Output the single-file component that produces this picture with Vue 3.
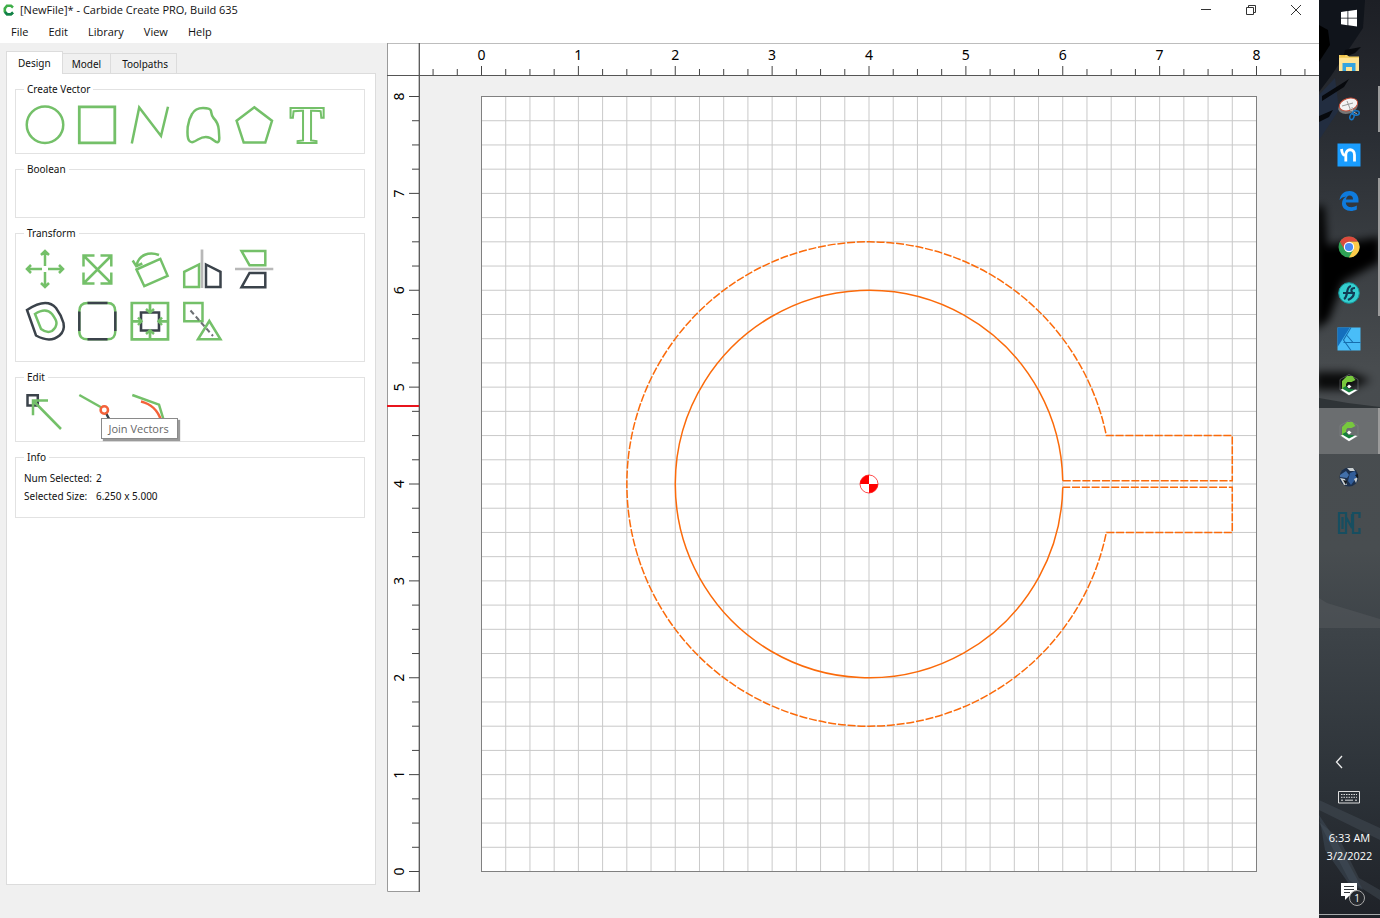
<script setup>
import { ref } from 'vue';

const menus = ['File', 'Edit', 'Library', 'View', 'Help'];
const tabs = ['Design', 'Model', 'Toolpaths'];
const activeTab = ref('Design');

const G = '#74c069';
const D = '#3b434b';
const R = '#f4623a';
const S = '#b8b8b8';

// every tool is a list of strokes on a 40 x 40 grid
const groups = [
    {
        name: 'Create Vector',
        tools: [
            { label: 'Circle', strokes: [{ c: G, d: 'M20 1.5A18.2 18.2 0 1 1 20 38A18.2 18.2 0 1 1 20 1.5Z' }] },
            { label: 'Rectangle', strokes: [{ c: G, w: 2.8, d: 'M2.3 1.9H37.8V37.9H2.3Z' }] },
            { label: 'Polyline', strokes: [{ c: G, d: 'M1.8 38.5L9.2 2.5L31 31L38 1.8' }] },
            { label: 'Curve', strokes: [{ c: G, d: 'M10 9C13 3.5 17 3 21 3C26 3 28.5 3.5 29 6C29.5 9 29.5 11 31.5 13C35 16.5 36.5 20 36.8 25L37.3 33C37.3 37.5 35.5 38.5 32 35.5C27 31 21 31.5 16 34.5C12 37 9.5 38.5 7 35.5C5 32.5 5.3 27 5.7 22C6.3 17 7.5 13 10 9Z' }] },
            { label: 'Polygon', strokes: [{ c: G, d: 'M20.3 2.3L38 15.8L31.3 37.6H9.7L2.6 15.8Z' }] },
            { label: 'Text', letter: 'T', strokes: [] }
        ]
    },
    { name: 'Boolean', tools: [] },
    {
        name: 'Transform',
        roomy: true,
        tools: [
            { label: 'Move', strokes: [{ c: G, d: 'M20 2V17M20 23V38M2 20H17M23 20H38M16 6L20 2L24 6M16 34L20 38L24 34M6 16L2 20L6 24M34 16L38 20L34 24' }] },
            { label: 'Scale', strokes: [{ c: G, d: 'M7 7L34 34M34 7L7 34M6.5 17.5V6.5H17.5M23.5 6.5H34.3V17.5M34.3 23.5V34.5H23.5M17.5 34.5H6.5V23.5' }] },
            { label: 'Rotate', strokes: [{ c: G, d: 'M6.5 20.5L30.3 9.8L37.6 26.8L14.3 37.2ZM29 6C19 2 9 6 6.5 16M2.7 11.5L6.3 17.2L12.3 14.5' }] },
            { label: 'Mirror Horizontal', strokes: [{ c: S, w: 2.7, d: 'M20 0.5V39' }, { c: G, d: 'M17 15.5V38H2.2V22.8Z' }, { c: D, d: 'M24 15.5L38.5 22.8V38H24Z' }] },
            { label: 'Mirror Vertical', strokes: [{ c: S, w: 2.7, d: 'M1 20H39.3' }, { c: G, d: 'M7.5 2H31.3V16.2H15.5Z' }, { c: D, d: 'M15.5 24H31.3V38.3H7.5Z' }] },
            { label: 'Offset Vectors', row: true, strokes: [{ c: D, d: 'M2 9C14 1 24 -1 31 7C34 11 37 17 38.5 22C39.5 27 38.5 31 34.5 34.5C28 40 20 39.5 11 34.5Z' }, { c: G, d: 'M10 13C17 8.5 23 8.5 27 13C30 17 31.5 19.5 31.5 22C31.5 26 29.5 28 27 30C23 32 20 31 16 28Z' }] },
            { label: 'Fillet Vectors', strokes: [{ c: G, d: 'M2.3 10.5C2.3 4.5 5 2 10.5 2H30.5C36 2 38.3 4.5 38.3 10.5V30C38.3 36 36 38.3 30.5 38.3H10.5C5 38.3 2.3 36 2.3 30Z' }, { c: D, d: 'M10.5 2H30.5M10.5 38.3H30.5M2.3 10.5V30M38.3 10.5V30' }] },
            { label: 'Align Vectors', strokes: [{ c: D, w: 2.6, d: 'M11 11.5H29V29.5H11Z' }, { c: G, w: 2.7, d: 'M1.8 2H38V38.3H1.8Z M20 2V11M20 38V30M2 20.3H11M38 20.3H29' }, { c: G, d: 'M16 8L20 11.5L24 8M16 33L20 29.5L24 33M8 16.5L11.5 20.3L8 24M32 16.5L28.5 20.3L32 24' }] },
            { label: 'Linear Array', strokes: [{ c: G, d: 'M2.3 2H20.5V20.3H2.3ZM27.3 20L38.5 38.3H16Z' }, { c: '#6d7074', w: 2, dash: '5 3', d: 'M8.5 9.5L31 35' }] }
        ]
    },
    {
        name: 'Edit',
        tools: [
            { label: 'Node Edit', strokes: [{ c: D, d: 'M2.5 2.3H12.8V12.5H2.5Z' }, { c: G, d: 'M23 7.5H8V22.3M8 7.5L36 36' }] },
            { label: 'Join Vectors', tip: true, strokes: [{ c: G, d: 'M2.3 2L24.5 14.5' }, { c: D, d: 'M29 20L31.5 25L38 36' }, { c: R, w: 2.5, d: 'M27.3 13.3A3.7 3.7 0 1 1 27.3 20.7A3.7 3.7 0 1 1 27.3 13.3Z' }] },
            { label: 'Trim Vectors', strokes: [{ c: G, d: 'M2.3 2L29 11.7L37 38' }, { c: R, d: 'M11 8.5C21 11 27 16 31 27' }] }
        ]
    }
];

// drawing area, inches to canvas units
const PX = 96.875;
const sx = (v) => 94.5 + v * PX;
const sy = (v) => 828.5 - v * PX;

const quarters = Array.from({ length: 33 }, (_, i) => i / 4);
const topTicks = Array.from({ length: 37 }, (_, i) => i / 4 - 0.5);
const inches = Array.from({ length: 9 }, (_, i) => i);
const isMajor = (v) => Number.isInteger(v) && v >= 0;

const outer = 2.5 * PX;
const inner = 2 * PX;
const slit = 0.034;
const clampShape = [
    `M${sx(6)} ${sy(4 + slit)}H${sx(7.75)}V${sy(4.5)}H${sx(6.45)}`,
    `A${outer} ${outer} 0 1 0 ${sx(6.45)} ${sy(3.5)}`,
    `H${sx(7.75)}V${sy(4 - slit)}H${sx(6)}`
].join('');
const boreShape = `M${sx(6)} ${sy(4 + slit)}A${inner} ${inner} 0 1 0 ${sx(6)} ${sy(4 - slit)}`;

const apps = [
    { id: 'explorer', label: 'File Explorer' },
    { id: 'snip', label: 'Snipping Tool', open: true },
    { id: 'nextdoor', label: 'Nextdoor' },
    { id: 'edge', label: 'Microsoft Edge', open: true },
    { id: 'chrome', label: 'Google Chrome', open: true },
    { id: 'freehand', label: 'Freehand', open: true },
    { id: 'affinity', label: 'Affinity Designer' },
    { id: 'carbide', label: 'Carbide Create' },
    { id: 'carbide', label: 'Carbide Create PRO', open: true, active: true },
    { id: 'globe', label: 'Globe' },
    { id: 'cnc', label: 'CNC' }
];
</script>

<template>
    <div class="desktop">
        <div class="window">
            <header class="titlebar">
                <svg class="logo" viewBox="0 0 12 12">
                    <path d="M10 3.5L8 1.8H4L1.8 4.5V7.5L4 10.2H8L10 8.5" fill="none" stroke="#3fae49" stroke-width="2.6" />
                    <path d="M2 8L4 10.2H8L10 8.5" fill="none" stroke="#12804a" stroke-width="2.6" />
                </svg>
                <h1>[NewFile]* - Carbide Create PRO, Build 635</h1>
                <div class="controls">
                    <button type="button" aria-label="Minimize">
                        <svg viewBox="0 0 12 12"><path d="M1 5.5H11" /></svg>
                    </button>
                    <button type="button" aria-label="Restore">
                        <svg viewBox="0 0 12 12"><path d="M1.5 3.5H8.5V10.5H1.5ZM3.5 3.5V1.5H10.5V8.5H8.5" /></svg>
                    </button>
                    <button type="button" aria-label="Close">
                        <svg viewBox="0 0 12 12"><path d="M1 1L11 11M11 1L1 11" /></svg>
                    </button>
                </div>
            </header>

            <nav class="menubar">
                <button v-for="menu in menus" :key="menu" type="button">{{ menu }}</button>
            </nav>

            <main class="workspace">
                <aside class="side">
                    <div class="tabs" role="tablist">
                        <button v-for="tab in tabs" :key="tab" type="button" role="tab" :aria-selected="tab === activeTab"
                            :class="{ active: tab === activeTab }" @click="activeTab = tab">{{ tab }}</button>
                    </div>
                    <div class="pane">
                        <fieldset v-for="group in groups" :key="group.name" :class="{ roomy: group.roomy }">
                            <legend>{{ group.name }}</legend>
                            <div class="tools">
                                <div v-for="tool in group.tools" :key="tool.label" class="tool" :class="{ row: tool.row }">
                                    <button type="button" :aria-label="tool.label">
                                        <svg viewBox="0 0 40 40">
                                            <path v-for="(s, i) in tool.strokes" :key="i" :d="s.d" fill="none" :stroke="s.c"
                                                :stroke-width="s.w || 2.5" :stroke-dasharray="s.dash" />
                                            <text v-if="tool.letter" class="outlined" x="20" y="37.5">{{ tool.letter }}</text>
                                        </svg>
                                    </button>
                                    <span v-if="tool.tip" class="tooltip" role="tooltip">{{ tool.label }}</span>
                                </div>
                            </div>
                        </fieldset>
                        <fieldset class="info">
                            <legend>Info</legend>
                            <dl>
                                <dt>Num Selected:</dt>
                                <dd>2</dd>
                                <dt>Selected Size:</dt>
                                <dd>6.250 x 5.000</dd>
                            </dl>
                        </fieldset>
                    </div>
                </aside>

                <svg class="canvas" viewBox="0 0 932 849">
                    <rect x="0" y="0" width="932" height="32" fill="#fff" />
                    <rect x="0" y="0" width="32" height="849" fill="#fff" />
                    <path d="M0 0.5H932" stroke="#bdbdbd" />
                    <path d="M0.5 0V848.5H32" stroke="#9a9a9a" fill="none" />
                    <path d="M0 32.5H932" stroke="#555" />
                    <path d="M32.3 0V849" stroke="#555" stroke-width="1.3" />

                    <g stroke="#444">
                        <line v-for="t in topTicks" :key="'t' + t" :x1="sx(t)" :x2="sx(t)" :y1="isMajor(t) ? 23 : 26" y2="32" />
                        <line v-for="t in quarters" :key="'l' + t" :y1="sy(t)" :y2="sy(t)" :x1="isMajor(t) ? 22 : 25" x2="32" />
                    </g>
                    <g class="numbers">
                        <text v-for="n in inches" :key="'x' + n" :x="sx(n)" y="17">{{ n }}</text>
                        <text v-for="n in inches" :key="'y' + n" :transform="`translate(17 ${sy(n)}) rotate(-90)`">{{ n }}</text>
                    </g>
                    <path d="M0 363H32" stroke="#e8141c" stroke-width="2" />

                    <rect :x="sx(0)" :y="sy(8)" :width="8 * PX" :height="8 * PX" fill="#fff" />
                    <g stroke="#c9c9c9">
                        <line v-for="q in quarters" :key="'v' + q" :x1="sx(q)" :x2="sx(q)" :y1="sy(0)" :y2="sy(8)" />
                        <line v-for="q in quarters" :key="'h' + q" :x1="sx(0)" :x2="sx(8)" :y1="sy(q)" :y2="sy(q)" />
                    </g>
                    <rect :x="sx(0)" :y="sy(8)" :width="8 * PX" :height="8 * PX" fill="none" stroke="#808080" />

                    <path :d="clampShape" class="vector" stroke-dasharray="8 1.8" />
                    <path :d="boreShape" class="vector" />

                    <g :transform="`translate(${sx(4)} ${sy(4)})`">
                        <circle r="9" fill="#fff" stroke="#f00" stroke-width="0.7" />
                        <path d="M0 0H-9A9 9 0 0 1 0 -9ZM0 0H9A9 9 0 0 1 0 9Z" fill="#f00" />
                    </g>
                </svg>
            </main>
        </div>

        <aside class="taskbar">
            <svg class="wallpaper" viewBox="0 0 61 918" preserveAspectRatio="none">
                <defs>
                    <linearGradient id="sky" x1="0" y1="0" x2="0" y2="1">
                        <stop offset="0" stop-color="#1d1f25" />
                        <stop offset="0.15" stop-color="#2a2e34" />
                        <stop offset="0.27" stop-color="#393d41" />
                        <stop offset="0.4" stop-color="#484c4f" />
                        <stop offset="0.6" stop-color="#484d50" />
                        <stop offset="0.69" stop-color="#3d4348" />
                        <stop offset="0.86" stop-color="#2c3238" />
                        <stop offset="1" stop-color="#1f2228" />
                    </linearGradient>
                    <filter id="soft" x="-50%" y="-50%" width="200%" height="200%">
                        <feGaussianBlur stdDeviation="4" />
                    </filter>
                </defs>
                <rect width="61" height="918" fill="url(#sky)" />
                <path d="M0 0H46L44 28L12 76L0 92Z" fill="#10141b" />
                <path d="M0 25L9 30L11 45L0 62Z" fill="#000" />
                <path d="M0 95L16 78L20 110L0 140Z" fill="#222d40" />
                <path d="M3 96L30 79L25 87L3 101ZM0 116L14 110L10 117L0 122ZM26 50L42 47L36 53L24 58Z" fill="#07090d" />
                <path d="M-4 206H5L8 245L61 237V262L24 282L10 320L-4 330Z" fill="#000" filter="url(#soft)" />
                <path d="M-4 372H30L52 380L30 390H-4Z" fill="#000" opacity="0.85" filter="url(#soft)" />
                <path d="M0 398Q30 404 61 407V410H0Z" fill="#2f3437" />
                <path d="M0 598L8 603L61 619V628H0Z" fill="#555a5d" opacity="0.5" />
                <path d="M0 800L61 828V840L0 810ZM0 822L20 838L40 878L61 890V900L30 880Z" fill="#4b565f" opacity="0.4" />
                <path d="M0 815L18 842L44 890L30 884L6 850Z" fill="#465664" opacity="0.4" />
                <path d="M0 914.5H61" stroke="#a6a8aa" />
            </svg>

            <button type="button" class="start" aria-label="Start">
                <svg viewBox="0 0 24 24">
                    <path d="M4 6L10.5 5V11.7H4ZM11.3 4.9L20 3.7V11.7H11.3ZM4 12.5H10.5V19.2L4 18.2ZM11.3 12.5H20V20.5L11.3 19.3Z" fill="#fff" />
                </svg>
            </button>

            <button v-for="app in apps" :key="app.label" type="button" class="app" :class="{ open: app.open, active: app.active }"
                :aria-label="app.label">
                <svg v-if="app.id === 'explorer'" viewBox="0 0 24 24">
                    <path d="M2 4H10L12 5.5H22V20H2Z" fill="#f4cf63" />
                    <path d="M2 7H22V20H2Z" fill="#ffe394" />
                    <path d="M3.5 4.8H8" stroke="#e9b93c" stroke-width="1.2" />
                    <path d="M5.5 12H18.5V20H15V16H9V20H5.5Z" fill="#35a4df" />
                </svg>
                <svg v-else-if="app.id === 'snip'" viewBox="0 0 24 24">
                    <ellipse cx="11" cy="10" rx="10" ry="6.5" fill="#777" transform="rotate(-18 11 10)" />
                    <ellipse cx="11.5" cy="7.5" rx="9.5" ry="6" fill="#f3f3f3" stroke="#c64a35" transform="rotate(-18 11.5 7.5)" />
                    <path d="M10 4L14 14M5 9L16 6" stroke="#999" />
                    <path d="M12 12L20 17M15 10L16 18" stroke="#aaa" />
                    <g fill="none" stroke="#1878c8" stroke-width="1.5">
                        <ellipse cx="19" cy="16" rx="3.3" ry="2.2" />
                        <ellipse cx="15" cy="19.5" rx="2" ry="3.2" transform="rotate(20 15 19.5)" />
                    </g>
                </svg>
                <svg v-else-if="app.id === 'nextdoor'" viewBox="0 0 24 24">
                    <rect x="0.5" y="0.5" width="23" height="23" fill="#1a9dff" />
                    <path d="M4.5 6C5 11 6 12 8.5 12.5M8.8 18.500V12C8.800 5 17.500 5 17.500 12V18.500" fill="none" stroke="#fff" stroke-width="2.8" />
                </svg>
                <svg v-else-if="app.id === 'edge'" viewBox="0 0 24 24">
                    <path d="M2.5 11C3.5 5 7.5 2 12.5 2C18.5 2 21.5 6.5 21.5 11V13.5H8.8C9 18.5 15 19.5 19.8 16.5V20.5C13 24 5 21 5 14.5C5 11 7 8.5 9.5 7.5C6.5 7.8 4 9 2.5 11ZM9 10.5H16C16 7.5 14.5 6.5 12.8 6.5C10.5 6.5 9.3 8.5 9 10.5Z" fill="#0f7bdc" />
                </svg>
                <svg v-else-if="app.id === 'chrome'" viewBox="0 0 24 24">
                    <circle cx="12" cy="12" r="10.5" fill="#2fa255" />
                    <path d="M12 12L2.9 6.75A10.5 10.5 0 0 1 21.1 6.75H12Z" fill="#dc4a3d" />
                    <path d="M21.1 6.75A10.5 10.5 0 0 1 12 22.5L16.5 14.5L12 6.75Z" fill="#fccb4a" />
                    <path d="M2.9 6.75L7.5 14.6L12 12Z" fill="#dc4a3d" />
                    <circle cx="12" cy="12" r="5.2" fill="#fff" />
                    <circle cx="12" cy="12" r="4.1" fill="#4a8bf5" />
                </svg>
                <svg v-else-if="app.id === 'freehand'" viewBox="0 0 24 24">
                    <circle cx="12" cy="12" r="10.3" fill="#35cfd0" stroke="#159a9e" />
                    <path d="M6 12H18M14 5C8 6 12 15 7 18M18 7C13 7 14 11 16 12C18 14 15 17 11 19" fill="none" stroke="#123c55" stroke-width="2.2" />
                </svg>
                <svg v-else-if="app.id === 'affinity'" viewBox="0 0 24 24">
                    <rect x="0.5" y="0.5" width="23" height="23" fill="#49bdf8" />
                    <path d="M0.5 0.5H13L0.5 20Z" fill="#146fbd" />
                    <path d="M14 0.5L6.5 13L14 23.5M6.5 15.5H23.5M10 8.5L16 15.5" fill="none" stroke="#176eae" stroke-width="1.1" />
                </svg>
                <svg v-else-if="app.id === 'carbide'" viewBox="0 0 24 24">
                    <path d="M12 1.5L21 6.5V17L12 22L3 17V6.5Z" fill="none" stroke="#85898a" stroke-width="0.7" opacity="0.7" />
                    <path d="M5 8L10 3H15.5L18.5 7L14.5 9H10.5L9 11V14L5 17Z" fill="#77c83d" />
                    <path d="M5.5 15L9 13L11.5 16H15.5L18.5 17.5L15 20H9.5Z" fill="#16803c" />
                    <path d="M10 13.5L12 11.5L14.5 13.5L12 15.5ZM3.5 16.5L6 16L12 19.5L18 16.5L20.5 17L12 22.3Z" fill="#fff" />
                </svg>
                <svg v-else-if="app.id === 'globe'" viewBox="0 0 24 24">
                    <circle cx="12" cy="12" r="9.5" fill="#1c304d" />
                    <path d="M3 10L9 6L12 10L10 13L3 12Z" fill="#4270aa" />
                    <path d="M13 8L18 6L20 12L14 20L11 16Z" fill="#315d9a" />
                    <path d="M10 3H16L18 6L13 6ZM3 13L8 14L10 20L7 20ZM17 14L21 12L19 18Z" fill="#c9cecf" />
                    <path d="M6 15L10 16L9 20ZM18 10L21 9V14Z" fill="#14181c" />
                </svg>
                <svg v-else viewBox="0 0 24 24">
                    <path d="M9 6V2H2V22H9V18M9 18V6L15 17V3M22.5 7V2H16V22H22.500V17M5.500 6V18" fill="none" stroke="#174e60" stroke-width="2.2" />
                </svg>
            </button>

            <div class="tray">
                <button type="button" class="chevron" aria-label="Show hidden icons">
                    <svg viewBox="0 0 24 24"><path d="M15 6L9.5 12L15 18" fill="none" stroke="#eee" stroke-width="1.3" /></svg>
                </button>
                <button type="button" class="keyboard" aria-label="Touch keyboard">
                    <svg viewBox="0 0 24 24">
                        <path d="M1.5 6.5H22.5V18H1.5Z" fill="none" stroke="#ddd" />
                        <path d="M4 9.5H20M4 12.3H20" stroke="#ddd" stroke-dasharray="1.5 1" />
                        <path d="M4 15.2H6M8 15.2H16M18 15.2H20" stroke="#ddd" />
                    </svg>
                </button>
                <time datetime="2022-03-02T06:33">6:33 AM<br>3/2/2022</time>
                <button type="button" class="notes" aria-label="Notifications">
                    <svg viewBox="0 0 24 24">
                        <path d="M4 3H20V16H12L8 20V16H4Z" fill="#fff" />
                        <path d="M7 6.5H17M7 9.5H17M7 12.5H13" stroke="#33373c" />
                    </svg>
                    <span class="badge">1</span>
                </button>
            </div>
        </aside>
    </div>
</template>

<style>
body {
    margin: 0;
}
</style>

<style scoped>
.desktop {
    display: flex;
    min-height: 100vh;
    background: #f0f0f0;
    color: #111;
    font-family: "Open Sans", "Noto Sans", sans-serif;
    font-size: 11px;
}

button {
    margin: 0;
    padding: 0;
    border: 0;
    background: none;
    color: inherit;
    font: inherit;
}

svg {
    display: block;
}

.window {
    display: flex;
    flex: 1;
    flex-direction: column;
    min-width: 0;
}

.titlebar {
    display: flex;
    align-items: center;
    height: 20px;
    padding: 0 1px 0 3px;
    background: #fff;
}

.logo {
    width: 12px;
    height: 12px;
}

h1 {
    flex: 1;
    margin: 0 0 0 5px;
    font-size: 11px;
    font-weight: 400;
    line-height: 20px;
}

.controls {
    display: flex;
}

.controls button {
    display: flex;
    align-items: center;
    justify-content: center;
    width: 45px;
    height: 20px;
}

.controls svg {
    width: 12px;
    height: 12px;
    fill: none;
    stroke: #333;
}

.menubar {
    display: flex;
    gap: 20px;
    height: 23px;
    padding-left: 11px;
    background: #fff;
}

.workspace {
    display: flex;
    flex: 1;
    align-items: flex-start;
}

.side {
    display: flex;
    flex: none;
    flex-direction: column;
    align-self: stretch;
    box-sizing: border-box;
    width: 387px;
    padding: 8px 11px 33px 6px;
    font-family: "Noto Sans", sans-serif;
    font-size: 10px;
}

.tabs {
    display: flex;
    align-items: flex-end;
}

.tabs button {
    height: 20px;
    padding: 0 9px;
    border: 1px solid #dcdcdc;
    border-width: 1px 1px 0 0;
}

.tabs button:last-child {
    padding: 0 8px 0 11px;
}

.tabs .active {
    position: relative;
    height: 23px;
    margin-bottom: -1px;
    padding: 0 11px;
    border-left-width: 1px;
    background: #fff;
}

.pane {
    flex: 1;
    padding: 8px 10px 8px 8px;
    border: 1px solid #dcdcdc;
    background: #fff;
}

fieldset {
    min-width: 0;
    margin: 0 0 8px;
    padding: 9px 0 8px 3px;
    border: 1px solid #e2e2e2;
}

.roomy {
    padding-bottom: 20px;
}

legend {
    margin-left: 5px;
    padding: 0 3px;
    line-height: 14px;
}

.tools {
    display: grid;
    grid-template-columns: repeat(6, 1fr);
    row-gap: 12px;
    width: 314px;
    min-height: 24px;
}

.tool {
    position: relative;
    justify-self: center;
    width: 40px;
    height: 40px;
}

.row {
    grid-column-start: 1;
}

.tool svg {
    width: 40px;
    height: 40px;
    overflow: visible;
}

.outlined {
    fill: none;
    stroke: #74c069;
    stroke-width: 2;
    font-family: "Liberation Serif", serif;
    font-size: 52px;
    font-weight: 700;
    text-anchor: middle;
}

.tooltip {
    position: absolute;
    top: 25px;
    left: 24px;
    z-index: 1;
    padding: 0 8px 0 6px;
    border: 1px solid #8a8a8a;
    background: #fff;
    box-shadow: 2px 2px 1px #9a9a9a;
    color: #666;
    font-family: "Open Sans", sans-serif;
    font-size: 11px;
    line-height: 19px;
    white-space: nowrap;
}

.info {
    padding: 5px 8px 12px;
}

.info legend {
    margin-left: 0;
}

dl {
    display: grid;
    grid-template-columns: max-content 1fr;
    column-gap: 4px;
    margin: 0;
    line-height: 18px;
}

dd {
    margin: 0;
}

.canvas {
    flex: 1;
    min-width: 0;
    height: auto;
}

.numbers {
    fill: #000;
    font-family: "Noto Sans", sans-serif;
    font-size: 14px;
    text-anchor: middle;
}

.vector {
    fill: none;
    stroke: #fb6a0a;
    stroke-width: 1.5;
}

.taskbar {
    position: relative;
    display: flex;
    flex: none;
    flex-direction: column;
    width: 61px;
    color: #fff;
}

.wallpaper {
    position: absolute;
    inset: 0;
    width: 100%;
    height: 100%;
}

.taskbar button {
    position: relative;
    display: flex;
    flex: none;
    align-items: center;
    justify-content: center;
    padding-right: 1px;
}

.taskbar button svg {
    width: 24px;
    height: 24px;
}

.taskbar .start {
    height: 40px;
    padding-bottom: 5px;
}

.taskbar .app {
    height: 46px;
}

.app.open {
    box-shadow: inset -2px 0 #9b9b9b;
}

.app.active {
    background: #6b6e70;
}

.tray {
    position: relative;
    display: flex;
    flex-direction: column;
    margin-top: auto;
    padding-bottom: 8px;
}

.taskbar .chevron {
    height: 36px;
    padding-right: 21px;
}

.taskbar .keyboard {
    height: 34px;
}

time {
    padding: 15px 0 9px;
    font-size: 11px;
    line-height: 18px;
    text-align: center;
}

.taskbar .notes {
    height: 36px;
}

.badge {
    position: absolute;
    right: 15px;
    bottom: 4px;
    box-sizing: border-box;
    width: 16px;
    height: 16px;
    border: 1px solid #aaa;
    border-radius: 50%;
    background: #25282d;
    font-size: 10px;
    line-height: 14px;
    text-align: center;
}
</style>
